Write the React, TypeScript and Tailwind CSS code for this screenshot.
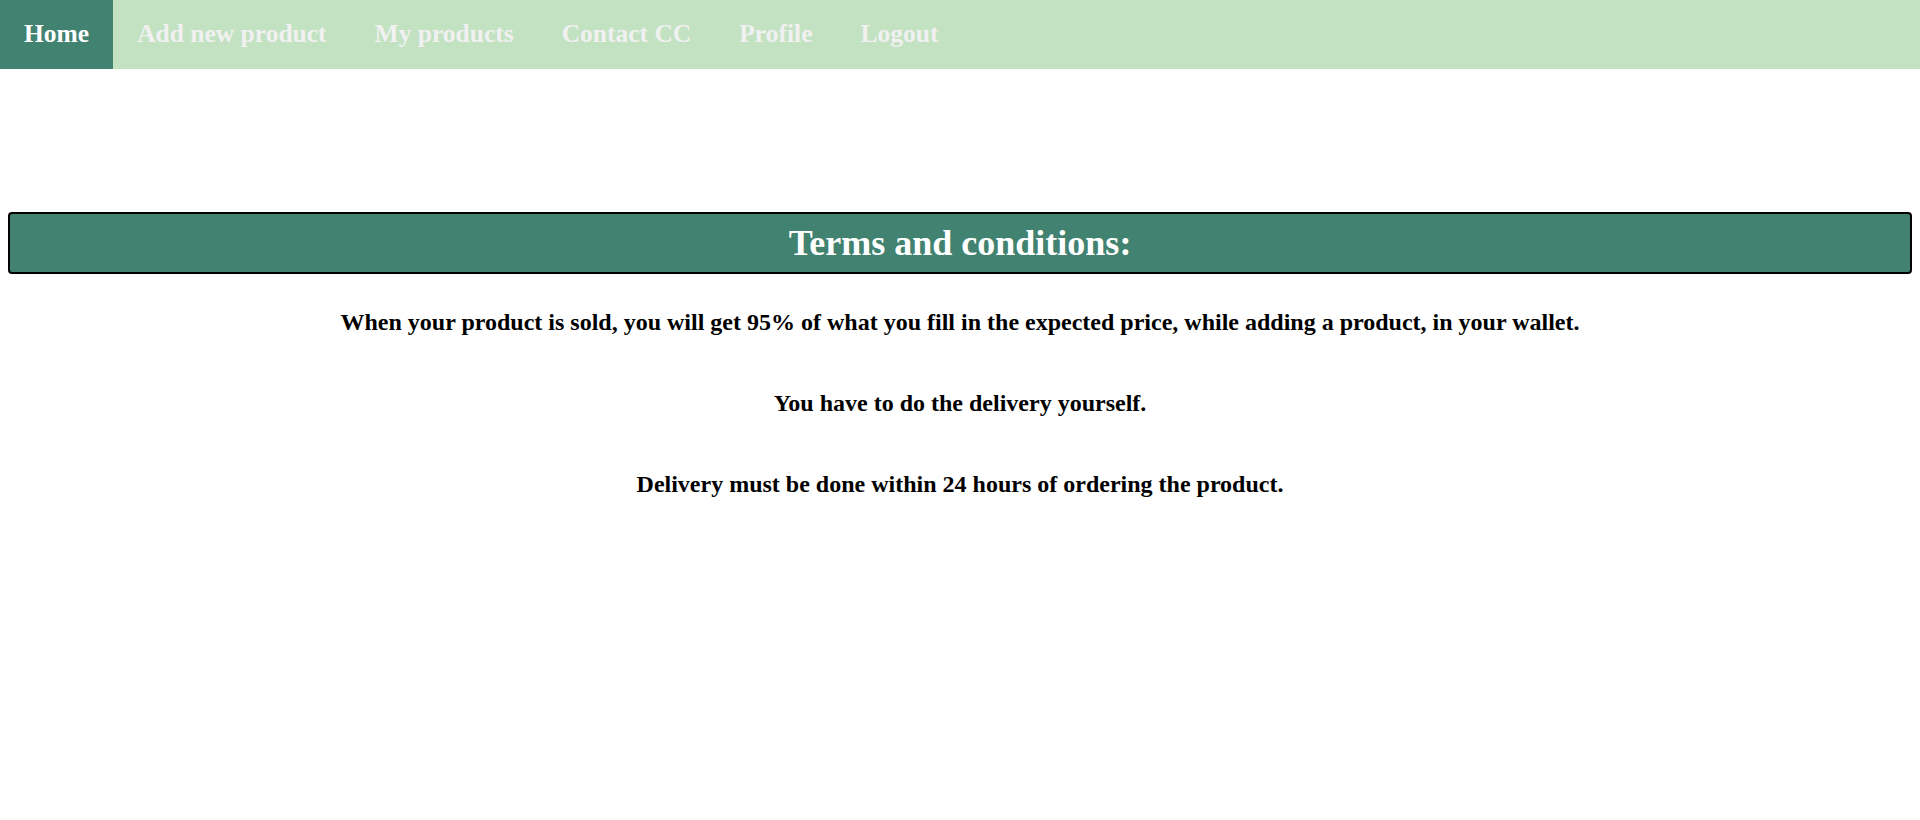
import React from "react";

const links = ["Home", "Add new product", "My products", "Contact CC", "Profile", "Logout"];

export default function App() {
  return (
    <div className="min-h-[820px] bg-white font-['Liberation_Serif','Times_New_Roman',serif]">
      <nav className="flex h-[69px] bg-[#c3e2c2]">
        {links.map((l, i) => (
          <a
            key={l}
            href="#"
            className={
              "flex items-center px-6 pb-[3px] text-[25.5px] font-bold leading-[29px] " +
              (i === 0 ? "bg-[#418270] text-white" : "text-[#f1f1f1]")
            }
          >
            {l}
          </a>
        ))}
      </nav>
      <div className="mx-2 mt-[143px] rounded-[4px] border-2 border-black bg-[#418270] py-[8px] text-center">
        <h1 className="text-[36px] font-bold leading-[42px] text-white">Terms and conditions:</h1>
      </div>
      <div className="mt-[34px] flex flex-col gap-[53px] text-center text-[24px] font-bold leading-[28px] text-black">
        <p>When your product is sold, you will get 95% of what you fill in the expected price, while adding a product, in your wallet.</p>
        <p>You have to do the delivery yourself.</p>
        <p>Delivery must be done within 24 hours of ordering the product.</p>
      </div>
    </div>
  );
}
